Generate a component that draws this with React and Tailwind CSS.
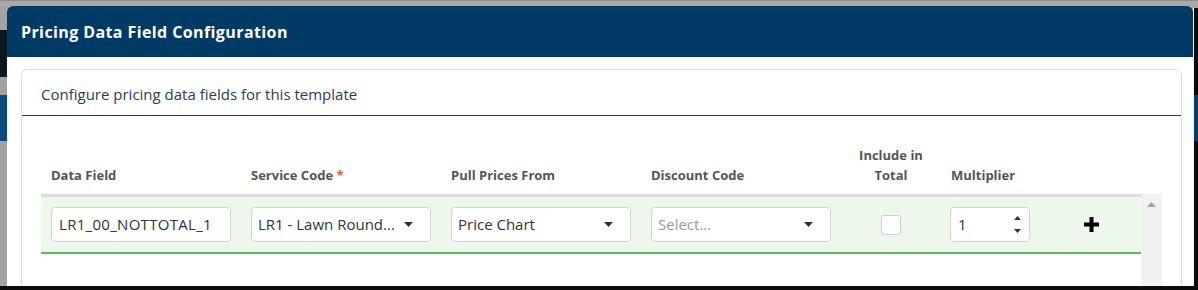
import React from "react";

const Caret = () => (
  <svg width="9" height="5" viewBox="0 0 9 5" className="shrink-0">
    <path d="M0 0 L9 0 L4.5 5 Z" fill="#333" />
  </svg>
);

const SelectBox = ({ value, placeholder }) => (
  <div className="flex h-[35px] w-[180px] items-center justify-between rounded-[4px] border border-[#d3d3d3] bg-white pl-[6px] pr-[17px]">
    <span className={placeholder ? "text-[15px] text-[#9a9a9a]" : "text-[15px] text-[#333]"}>
      {value}
    </span>
    <Caret />
  </div>
);

export default function App() {
  return (
    <div
      className="flex h-[290px] w-[1198px] flex-col overflow-hidden bg-[#a6a6a6]"
      style={{ fontFamily: '"Open Sans", "Noto Sans", sans-serif' }}
    >
      <div className="h-[6px] shrink-0 border-t border-[#8e8e8e] bg-[#a8a8a8]" />
      <div className="flex min-h-0 flex-1">
        {/* left background strip */}
        <div className="flex w-[7px] shrink-0 flex-col">
          <div className="h-[24px] bg-[#a3a3a3]" />
          <div className="h-[47px] bg-[#0d1722]" />
          <div className="h-[18px] bg-[#a3a3a3]" />
          <div className="h-[46px] bg-[#0a4a7e]" />
          <div className="flex-1 bg-[#a3a3a3]" />
        </div>
        {/* modal */}
        <div className="flex min-w-0 flex-1 flex-col overflow-hidden rounded-t-[6px] bg-white">
          <div className="flex h-[51px] shrink-0 items-center bg-[#013a65] pl-[14px]">
            <span className="text-[16px] font-bold tracking-[0.4px] text-white">Pricing Data Field Configuration</span>
          </div>
          <div className="flex-1 pl-[14px] pr-[11px] pt-[12px]">
            <div className="h-[260px] rounded-[6px] border border-[#dcdcdc] bg-white">
              <div className="flex h-[46px] items-center border-b border-[#1d3f60] pl-[19px] pt-[4px]">
                <span className="text-[15px] text-[#2c3d58]">Configure pricing data fields for this template</span>
              </div>
              <div className="pl-[19px]">
                {/* header row */}
                <div className="grid h-[78px] w-[1100px] grid-cols-[200px_200px_200px_200px_100px_100px_100px] items-end pb-[9px] text-[13px] font-bold leading-[20px] text-[#555]">
                  <div className="pl-[10px]">Data Field</div>
                  <div className="pl-[10px]">
                    Service Code <span className="text-[#e8573a]">*</span>
                  </div>
                  <div className="pl-[10px]">Pull Prices From</div>
                  <div className="pl-[10px]">Discount Code</div>
                  <div className="text-center">
                    Include in
                    <br />
                    Total
                  </div>
                  <div className="pl-[10px]">Multiplier</div>
                  <div />
                </div>
                <div className="flex">
                  <div className="w-[1100px] border-t-[3px] border-[#dedede]">
                    <div className="grid h-[57px] grid-cols-[200px_200px_200px_200px_100px_100px_100px] items-start border-b-2 border-[#5cb85c] bg-[#edf7ec] pt-[10px]">
                      <div className="pl-[10px]">
                        <div className="flex h-[35px] w-[180px] items-center rounded-[4px] border border-[#d3d3d3] bg-white pl-[7px] text-[15px] tracking-[0.3px] text-[#333]">
                          LR1_00_NOTTOTAL_1
                        </div>
                      </div>
                      <div className="pl-[10px]">
                        <SelectBox value="LR1 - Lawn Round..." />
                      </div>
                      <div className="pl-[10px]">
                        <SelectBox value="Price Chart" />
                      </div>
                      <div className="pl-[10px]">
                        <SelectBox value="Select..." placeholder />
                      </div>
                      <div className="flex h-[35px] items-center justify-center">
                        <div className="h-[20px] w-[20px] rounded-[3px] border border-[#cfcfcf] bg-white" />
                      </div>
                      <div className="pl-[9px]">
                        <div className="flex h-[35px] w-[80px] items-center justify-between rounded-[4px] border border-[#d3d3d3] bg-white pl-[7px] pr-[8px] text-[15px] text-[#333]">
                          <span>1</span>
                          <div className="flex flex-col gap-[9px]">
                            <svg width="7" height="4" viewBox="0 0 7 4">
                              <path d="M0 4 L7 4 L3.5 0 Z" fill="#333" />
                            </svg>
                            <svg width="7" height="4" viewBox="0 0 7 4">
                              <path d="M0 0 L7 0 L3.5 4 Z" fill="#333" />
                            </svg>
                          </div>
                        </div>
                      </div>
                      <div className="flex h-[35px] items-center justify-center">
                        <svg width="15" height="15" viewBox="0 0 15 15">
                          <rect x="5.5" y="0" width="4" height="15" fill="#000" />
                          <rect x="0" y="5.5" width="15" height="4" fill="#000" />
                        </svg>
                      </div>
                    </div>
                  </div>
                  <div className="flex h-[100px] w-[21px] shrink-0 justify-center bg-[#f1f1f1] pt-[8px]">
                    <svg width="9" height="5" viewBox="0 0 9 5">
                      <path d="M0 5 L9 5 L4.5 0 Z" fill="#a3a3a3" />
                    </svg>
                  </div>
                </div>
              </div>
            </div>
          </div>
        </div>
        {/* right strip */}
        <div className="flex w-[5px] shrink-0 flex-col">
          <div className="h-[2px] bg-[#a8a8a8]" />
          <div className="flex flex-1 flex-row">
            <div className="w-[1px] bg-[#f3f3f3]" />
            <div className="flex flex-1 flex-col">
              <div className="h-[87px] bg-[#0b0b0b]" />
              <div className="h-[46px] bg-[#0a3a66]" />
              <div className="flex-1 bg-[#0b0b0b]" />
            </div>
          </div>
        </div>
      </div>
      <div className="h-[4px] shrink-0 bg-[#0b0b0b]" />
    </div>
  );
}
